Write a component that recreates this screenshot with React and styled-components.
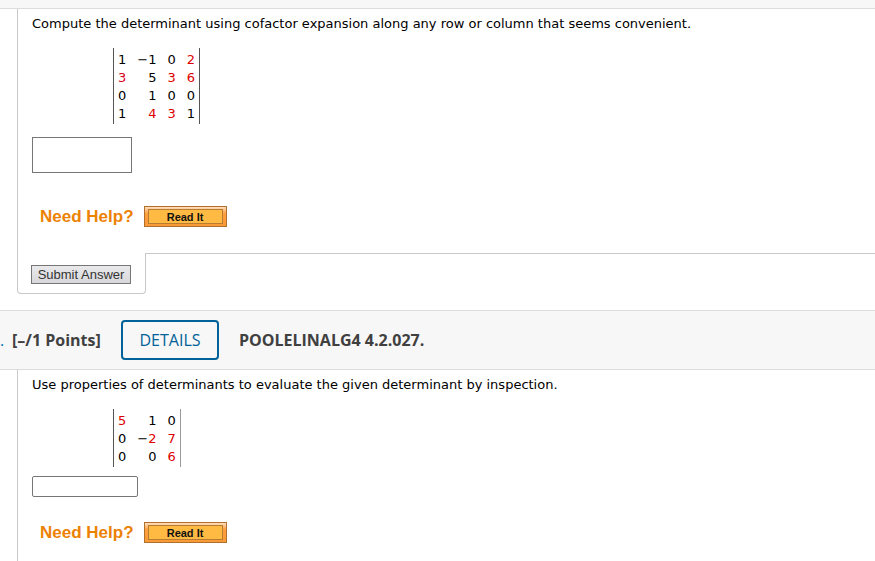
import React from 'react';
import styled, { createGlobalStyle } from 'styled-components';

const GlobalStyle = createGlobalStyle`
  *, *::before, *::after {
    box-sizing: border-box;
  }
  html {
    overflow: hidden;
  }
  body {
    margin: 0;
    background: #ffffff;
    color: #000000;
    font-family: Verdana, "DejaVu Sans", sans-serif;
    font-size: 13px;
    line-height: 18px;
  }
`;

const TopBar = styled.div`
  height: 9px;
  background: #f7f7f7;
  border-bottom: 1px solid #dcdcdc;
`;

const QuestionHeader = styled.header`
  display: flex;
  align-items: center;
  height: 60px;
  margin-top: 16px;
  background: #f7f7f7;
  border-top: 1px solid #dcdcdc;
  border-bottom: 1px solid #dcdcdc;
  color: #404040;
  font-family: "Open Sans", sans-serif;
  font-size: 16px;
  font-weight: 700;
  line-height: 24px;
  white-space: nowrap;
`;

const QuestionNumber = styled.span`
  width: 12px;
  color: #0076b6;
  font-weight: 400;
`;

const Points = styled.span`
  width: 109px;
`;

const DetailsButton = styled.button`
  width: 98px;
  height: 40px;
  margin-right: 20px;
  padding: 0;
  border: 2px solid #006298;
  border-radius: 4px;
  background: transparent;
  color: #006298;
  font-family: inherit;
  font-size: 16px;
  font-weight: 500;
  cursor: pointer;
`;

const QuestionBody = styled.section`
  margin-left: 17px;
  padding: 6px 14px 26px;
  border-left: 1px solid #c8c8c8;
`;

const Prompt = styled.label`
  display: block;
`;

const Determinant = styled.table`
  margin: 15px 0 0 81px;
  border-collapse: separate;
  border-spacing: 0;
  border-left: 1px solid #555555;
  border-right: 1px solid ${p => (p.$light ? '#999999' : '#555555')};
  padding: 3px 4px 1px;
`;

const Entry = styled.td`
  height: 18px;
  padding: 0 0 0 11px;
  color: ${p => p.$color};
  text-align: right;

  &:first-child {
    padding-left: 0;
  }
`;

const Minus = styled.span`
  color: #000000;
`;

const AnswerInput = styled.input`
  display: block;
  width: ${p => (p.$large ? '100px' : '106px')};
  height: ${p => (p.$large ? '36px' : '21px')};
  margin: ${p => (p.$large ? '13px 0 33px' : '9px 0 25px')};
  padding: 1px 4px;
  border: 1px solid #767676;
  border-radius: ${p => (p.$large ? '0' : '2px')};
  background: #ffffff;
  font: inherit;
`;

const HelpRow = styled.div`
  display: flex;
  align-items: center;
  gap: 10px;
  height: 21px;
  padding-left: 8px;
`;

const HelpLabel = styled.span`
  color: #ec8205;
  font-family: Arial, "Liberation Sans", sans-serif;
  font-size: 17px;
  font-weight: 700;
  white-space: nowrap;
`;

const ReadButton = styled.button`
  width: 83px;
  height: 21px;
  padding: 2px 3px;
  border: 1px solid #b06f2b;
  background: linear-gradient(#ffdfbf, #ff9e3d 35%, #f99a38);
  cursor: pointer;
`;

const ReadFace = styled.span`
  display: block;
  height: 15px;
  border: 1px solid #b87c30;
  background: #ffba43;
  color: #111111;
  font-family: Arial, "Liberation Sans", sans-serif;
  font-size: 11px;
  font-weight: 700;
  line-height: 14px;
`;

const SubmitRow = styled.footer`
  display: flex;
  margin-left: 17px;
`;

const SubmitBox = styled.div`
  width: 129px;
  height: 41px;
  padding: 12px 13px 9px;
  border: 1px solid #c8c8c8;
  border-top: 0;
  border-radius: 0 0 4px 4px;
`;

const SubmitLine = styled.div`
  flex: 1;
  border-top: 1px solid #c8c8c8;
`;

const SubmitButton = styled.button`
  display: block;
  width: 100px;
  height: 19px;
  padding: 0;
  border: 1px solid #767676;
  background: linear-gradient(#e9e9eb, #d8d8da);
  color: #333333;
  font-family: Arial, "Liberation Sans", sans-serif;
  font-size: 13px;
  line-height: 16px;
  white-space: nowrap;
  cursor: pointer;
`;

const RED = '#dd0000';
const PINK = '#dc0020';

// entries are [value, color], plain strings are black
const cofactorRows = [
  ['1', '−1', '0', ['2', RED]],
  [['3', PINK], '5', ['3', RED], ['6', RED]],
  ['0', '1', '0', '0'],
  ['1', ['4', RED], ['3', RED], '1'],
];

const inspectionRows = [
  [['5', RED], '1', '0'],
  ['0', ['−2', RED], ['7', RED]],
  ['0', '0', ['6', RED]],
];

const Matrix = ({ rows, light }) => (
  <Determinant $light={light}>
    <tbody>
      {rows.map((row, i) => (
        <tr key={i}>
          {row.map((entry, j) => {
            const [value, color] = Array.isArray(entry) ? entry : [entry, '#000000'];
            const negative = value.startsWith('−');
            return (
              <Entry key={j} $color={color}>
                {negative && <Minus>−</Minus>}
                {negative ? value.slice(1) : value}
              </Entry>
            );
          })}
        </tr>
      ))}
    </tbody>
  </Determinant>
);

const Question = ({ id, prompt, rows, large, light }) => (
  <QuestionBody>
    <Prompt htmlFor={id}>{prompt}</Prompt>
    <Matrix rows={rows} light={light} />
    <AnswerInput id={id} type="text" $large={large} />
    <HelpRow>
      <HelpLabel>Need Help?</HelpLabel>
      <ReadButton type="button">
        <ReadFace>Read It</ReadFace>
      </ReadButton>
    </HelpRow>
  </QuestionBody>
);

export default function App() {
  return (
    <>
      <GlobalStyle />
      <TopBar />
      <main>
        <Question
          id="cofactor"
          prompt="Compute the determinant using cofactor expansion along any row or column that seems convenient."
          rows={cofactorRows}
          large
        />
        <SubmitRow>
          <SubmitBox>
            <SubmitButton type="button">Submit Answer</SubmitButton>
          </SubmitBox>
          <SubmitLine />
        </SubmitRow>
        <QuestionHeader>
          <QuestionNumber>.</QuestionNumber>
          <Points>[–/1 Points]</Points>
          <DetailsButton type="button">DETAILS</DetailsButton>
          <span>POOLELINALG4 4.2.027.</span>
        </QuestionHeader>
        <Question
          id="inspection"
          prompt="Use properties of determinants to evaluate the given determinant by inspection."
          rows={inspectionRows}
          light
        />
      </main>
    </>
  );
}
